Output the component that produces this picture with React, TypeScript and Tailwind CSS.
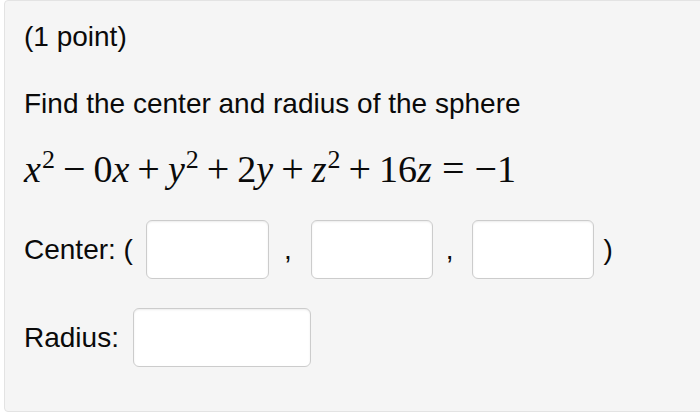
import React from "react";

const Sup = ({ children }: { children: React.ReactNode }) => (
  <span className="relative -top-[14px] ml-[1px] text-[26px] leading-none inline-block">{children}</span>
);

const Op = ({ children, cls }: { children: React.ReactNode; cls: string }) => (
  <span className={`text-[40px] inline-block ${cls}`}>{children}</span>
);

const Box = ({ w }: { w: string }) => (
  <input
    type="text"
    className={`${w} h-[59px] bg-white border border-[#cccccc] rounded-[6px] shadow-[inset_0_1px_2px_rgba(0,0,0,0.08)] outline-none`}
  />
);

export default function App() {
  return (
    <div className="w-[700px] h-[414px] bg-white overflow-hidden font-['Liberation_Sans',Arial,sans-serif] text-[#0a0a0a]">
      <div className="ml-[4px] w-[720px] h-[412px] bg-[#f5f5f5] border border-[#e3e3e3] rounded-[4px] pl-[19px] pt-[20px]">
        <div className="text-[28px] leading-[32px]">(1 point)</div>
        <div className="text-[28px] leading-[32px] mt-[35px]">Find the center and radius of the sphere</div>
        <div className="mt-[29px] h-[40px] leading-[40px] text-[38px] font-['Liberation_Serif','Times_New_Roman',serif] whitespace-nowrap">
          <i>x</i>
          <Sup>2</Sup>
          <Op cls="mx-[8px]">−</Op>
          <span>0</span>
          <i>x</i>
          <Op cls="mx-[8px]">+</Op>
          <i>y</i>
          <Sup>2</Sup>
          <Op cls="mx-[8px]">+</Op>
          <span>2</span>
          <i>y</i>
          <Op cls="mx-[8px]">+</Op>
          <i>z</i>
          <Sup>2</Sup>
          <Op cls="mx-[8px]">+</Op>
          <span>16</span>
          <i>z</i>
          <Op cls="mx-[10px]">=</Op>
          <Op cls="">−</Op>
          <span>1</span>
        </div>
        <div className="mt-[31px] flex items-center text-[28px] leading-[32px]">
          <span>Center: (</span>
          <span className="ml-[13px] flex"><Box w="w-[123px]" /></span>
          <span className="ml-[15px]">,</span>
          <span className="ml-[19px] flex"><Box w="w-[122px]" /></span>
          <span className="ml-[13px]">,</span>
          <span className="ml-[18px] flex"><Box w="w-[122px]" /></span>
          <span className="ml-[10px]">)</span>
        </div>
        <div className="mt-[29px] flex items-center text-[28px] leading-[32px]">
          <span>Radius:</span>
          <span className="ml-[14px] flex"><Box w="w-[178px]" /></span>
        </div>
      </div>
    </div>
  );
}
